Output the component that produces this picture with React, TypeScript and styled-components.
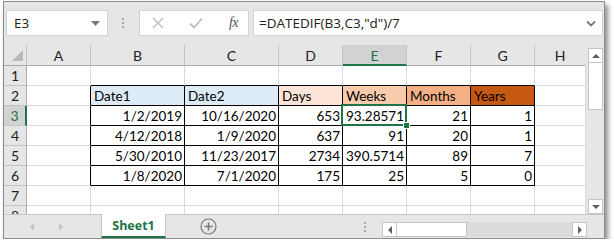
import styled, { createGlobalStyle } from 'styled-components'

const GREEN = '#217346'

const GlobalStyle = createGlobalStyle`
  html, body {
    margin: 0;
    padding: 0;
    background: #ffffff;
  }
`

type Fill = 'blue' | 'peach' | 'salmon' | 'orange' | 'rust'

const fills: Record<Fill, string> = {
  blue: '#ddebf7',
  peach: '#fce4d6',
  salmon: '#f8cbad',
  orange: '#f4b084',
  rust: '#c65911',
}

interface CellData {
  text: string
  fill?: Fill
  align?: 'left' | 'right'
}

const columns = ['A', 'B', 'C', 'D', 'E', 'F', 'G', 'H']
const widths = [23, 64, 94, 94, 64, 64, 64, 64, 51]

// the table sits in B2:G6
const table: CellData[][] = [
  [
    { text: 'Date1', fill: 'blue', align: 'left' },
    { text: 'Date2', fill: 'blue', align: 'left' },
    { text: 'Days', fill: 'peach', align: 'left' },
    { text: 'Weeks', fill: 'salmon', align: 'left' },
    { text: 'Months', fill: 'orange', align: 'left' },
    { text: 'Years', fill: 'rust', align: 'left' },
  ],
  [{ text: '1/2/2019' }, { text: '10/16/2020' }, { text: '653' }, { text: '93.28571' }, { text: '21' }, { text: '1' }],
  [{ text: '4/12/2018' }, { text: '1/9/2020' }, { text: '637' }, { text: '91' }, { text: '20' }, { text: '1' }],
  [{ text: '5/30/2010' }, { text: '11/23/2017' }, { text: '2734' }, { text: '390.5714' }, { text: '89' }, { text: '7' }],
  [{ text: '1/8/2020' }, { text: '7/1/2020' }, { text: '175' }, { text: '25' }, { text: '5' }, { text: '0' }],
]

const Page = styled.div`
  padding: 1px 0 0 3px;
`

const Window = styled.div`
  width: 600px;
  display: flex;
  flex-direction: column;
  background: #e6e6e6;
  border: 1px solid #8c8c8c;
  box-shadow: 3px 4px 5px rgba(0, 0, 0, 0.45);
`

const FormulaBar = styled.div`
  height: 43px;
  display: flex;
  align-items: center;
  padding: 0 0 1px 2px;
  box-sizing: border-box;
`

const InputBox = styled.div<{ $w?: number; $grow?: boolean }>`
  height: 26px;
  box-sizing: border-box;
  width: ${(p) => (p.$w ? `${p.$w}px` : 'auto')};
  flex: ${(p) => (p.$grow ? '1' : 'none')};
  background: #ffffff;
  border: 1px solid #d4d4d4;
  display: flex;
  align-items: center;
  font-family: 'Open Sans', 'Liberation Sans', sans-serif;
  font-size: 13.5px;
  color: #222;
`

const NameText = styled.span`
  flex: 1;
  padding-left: 7px;
`

const Formula = styled.span`
  flex: 1;
  padding-left: 5px;
  font-family: 'Open Sans', 'Liberation Sans', sans-serif;
  font-size: 13.5px;
  color: #222;
`

const Dots = styled.div<{ $mx: number }>`
  width: 3px;
  margin: 0 ${(p) => p.$mx}px;
  display: flex;
  flex-direction: column;
  gap: 2px;
  span {
    width: 2px;
    height: 2px;
    background: #a8a8a8;
  }
`

const FxButtons = styled(InputBox)`
  justify-content: space-between;
  padding: 0 10px 0 12px;
`

const Fx = styled.span`
  font-family: 'Liberation Serif', serif;
  font-style: italic;
  font-size: 14px;
  color: #555;
  letter-spacing: -0.5px;
`

const Body = styled.div`
  height: 169px;
  display: flex;
  gap: 2px;
`

const Sheet = styled.div`
  width: 582px;
  height: 169px;
  overflow: hidden;
  display: grid;
  grid-template-columns: ${widths.map((w) => `${w}px`).join(' ')};
  grid-template-rows: 21px repeat(8, 20px);
  background: #ffffff;
  font-family: Lato, 'Liberation Sans', sans-serif;
  font-size: 13.5px;
  color: #000;
`

const HeadCell = styled.div<{ $active?: boolean; $last?: boolean }>`
  box-sizing: border-box;
  background: ${(p) => (p.$active ? '#d2d2d2' : '#e6e6e6')};
  border-right: 1px solid ${(p) => (p.$last ? 'transparent' : '#c3c3c3')};
  border-bottom: ${(p) => (p.$active ? `2px solid ${GREEN}` : '1px solid #ababab')};
  color: ${(p) => (p.$active ? GREEN : '#222')};
  display: flex;
  align-items: center;
  justify-content: center;
  padding-top: ${(p) => (p.$active ? '2px' : '1px')};
  font-size: 14px;
`

const Corner = styled(HeadCell)`
  align-items: flex-end;
  justify-content: flex-end;
  padding: 0 3px 4px 0;
`

const RowHead = styled.div<{ $active?: boolean }>`
  box-sizing: border-box;
  background: ${(p) => (p.$active ? '#d2d2d2' : '#e6e6e6')};
  border-right: ${(p) => (p.$active ? `2px solid ${GREEN}` : '1px solid #ababab')};
  border-bottom: 1px solid #c3c3c3;
  color: ${(p) => (p.$active ? GREEN : '#222')};
  display: flex;
  align-items: center;
  justify-content: center;
  font-size: 14px;
`

const Cell = styled.div<{ $fill?: Fill; $align?: 'left' | 'right'; $right?: string; $bottom?: string }>`
  position: relative;
  box-sizing: border-box;
  background: ${(p) => (p.$fill ? fills[p.$fill] : '#ffffff')};
  border-right: 1px solid ${(p) => p.$right ?? '#d9d9d9'};
  border-bottom: 1px solid ${(p) => p.$bottom ?? '#d9d9d9'};
  display: flex;
  align-items: flex-end;
  justify-content: ${(p) => (p.$align === 'left' ? 'flex-start' : 'flex-end')};
  padding: 0 2px 1px 3px;
  white-space: nowrap;
`

const Selection = styled.div`
  position: absolute;
  left: -2px;
  top: -2px;
  right: -1px;
  bottom: -1px;
  border: 2px solid ${GREEN};
  pointer-events: none;
  z-index: 2;
`

const Handle = styled.div`
  position: absolute;
  right: -5px;
  bottom: -5px;
  width: 5px;
  height: 5px;
  background: ${GREEN};
  border: 1px solid #ffffff;
`

const VScroll = styled.div`
  width: 15px;
  margin-top: 3px;
  display: flex;
  flex-direction: column;
`

const ScrollBtn = styled.div`
  box-sizing: border-box;
  width: 15px;
  height: 15px;
  background: #ffffff;
  border: 1px solid #c6c6c6;
  display: flex;
  align-items: center;
  justify-content: center;
`

const VThumb = styled.div`
  height: 47px;
  box-sizing: border-box;
  background: #ffffff;
  border: 1px solid #c6c6c6;
  border-top: none;
`

const VTrack = styled.div`
  flex: 1;
`

const TabBar = styled.div`
  height: 23px;
  display: flex;
  align-items: stretch;
  border-top: 1px solid #c6c6c6;
`

const NavArea = styled.div`
  width: 97px;
  display: flex;
  align-items: center;
  gap: 23px;
  padding-left: 25px;
  box-sizing: border-box;
`

const Tab = styled.div`
  width: 65px;
  margin-top: -1px;
  box-sizing: border-box;
  background: #ffffff;
  border-left: 1px solid #c6c6c6;
  border-right: 1px solid #c6c6c6;
  border-bottom: 2px solid ${GREEN};
  display: flex;
  align-items: center;
  justify-content: center;
  font-family: 'Open Sans', 'Liberation Sans', sans-serif;
  font-weight: 700;
  font-size: 12.5px;
  color: ${GREEN};
`

const AddSheet = styled.div`
  width: 84px;
  display: flex;
  align-items: center;
  justify-content: center;
`

const Spacer = styled.div`
  flex: 1;
  display: flex;
  align-items: center;
  justify-content: flex-end;
  padding-right: 15px;
`

const HScroll = styled.div`
  width: 205px;
  height: 15px;
  margin-top: 7px;
  margin-right: 17px;
  display: flex;
  background: #dcdcdc;
`

const HThumb = styled.div`
  width: 70px;
  box-sizing: border-box;
  background: #ffffff;
  border: 1px solid #c6c6c6;
  border-left: none;
`

const HTrack = styled.div`
  flex: 1;
`

const Tri = ({ dir, color = '#606060' }: { dir: 'up' | 'down' | 'left' | 'right'; color?: string }) => {
  const pts = {
    up: '0,5 4,1 8,5',
    down: '0,1 8,1 4,5',
    left: '5,0 5,8 1,4',
    right: '1,0 1,8 5,4',
  }[dir]
  const horiz = dir === 'left' || dir === 'right'
  return (
    <svg width={horiz ? 6 : 8} height={horiz ? 8 : 6} viewBox={horiz ? '0 0 6 8' : '0 0 8 6'}>
      <polygon points={pts} fill={color} />
    </svg>
  )
}

export default function App() {
  const renderCell = (r: number, c: number) => {
    // r: 1..8, c: 0..7 (A..H)
    const inTable = r >= 2 && r <= 6 && c >= 1 && c <= 6
    const data = inTable ? table[r - 2][c - 1] : undefined
    let right: string | undefined
    let bottom: string | undefined
    if (inTable) {
      right = '#000'
      bottom = '#000'
    }
    if (c === 0 && r >= 2 && r <= 6) right = '#000'
    if (r === 1 && c >= 1 && c <= 6) bottom = '#000'
    const selected = r === 3 && c === 4
    return (
      <Cell key={`${r}-${c}`} $fill={data?.fill} $align={data?.align} $right={right} $bottom={bottom}>
        {data?.text}
        {selected && (
          <Selection>
            <Handle />
          </Selection>
        )}
      </Cell>
    )
  }

  return (
    <Page>
      <GlobalStyle />
      <Window>
        <FormulaBar>
          <InputBox $w={102}>
            <NameText>E3</NameText>
            <svg width="9" height="5" viewBox="0 0 9 5" style={{ marginRight: 7 }}>
              <polygon points="0,0 9,0 4.5,5" fill="#7a7a7a" />
            </svg>
          </InputBox>
          <Dots $mx={14}>
            <span />
            <span />
            <span />
          </Dots>
          <FxButtons $w={110}>
            <svg width="12" height="12" viewBox="0 0 12 12">
              <path d="M1 1 L11 11 M11 1 L1 11" stroke="#bdbdbd" strokeWidth="1.4" />
            </svg>
            <svg width="14" height="12" viewBox="0 0 14 12">
              <path d="M1 6.5 L5 10.5 L13 1.5" stroke="#bdbdbd" strokeWidth="1.8" fill="none" />
            </svg>
            <Fx>fx</Fx>
          </FxButtons>
          <InputBox $grow style={{ marginLeft: 4, marginRight: 1 }}>
            <Formula>=DATEDIF(B3,C3,"d")/7</Formula>
            <svg width="10" height="7" viewBox="0 0 10 7" style={{ marginRight: 6 }}>
              <path d="M1 1.5 L5 5.5 L9 1.5" stroke="#7a7a7a" strokeWidth="1.8" fill="none" />
            </svg>
          </InputBox>
        </FormulaBar>
        <Body>
          <Sheet>
            <Corner>
              <svg width="11" height="11" viewBox="0 0 11 11">
                <polygon points="11,0 11,11 0,11" fill="#b9b9b9" />
              </svg>
            </Corner>
            {columns.map((col, i) => (
              <HeadCell key={col} $active={col === 'E'} $last={i === columns.length - 1}>
                {col}
              </HeadCell>
            ))}
            {[1, 2, 3, 4, 5, 6, 7, 8].map((r) => [
              <RowHead key={`h${r}`} $active={r === 3}>
                {r}
              </RowHead>,
              ...columns.map((_, c) => renderCell(r, c)),
            ])}
          </Sheet>
          <VScroll>
            <ScrollBtn>
              <Tri dir="up" />
            </ScrollBtn>
            <VThumb />
            <VTrack />
            <ScrollBtn>
              <Tri dir="down" />
            </ScrollBtn>
          </VScroll>
        </Body>
        <TabBar>
          <NavArea>
            <Tri dir="left" color="#c4c4c4" />
            <Tri dir="right" color="#c4c4c4" />
          </NavArea>
          <Tab>Sheet1</Tab>
          <AddSheet>
            <svg width="17" height="17" viewBox="0 0 17 17">
              <circle cx="8.5" cy="8.5" r="7.5" stroke="#7a7a7a" strokeWidth="1.2" fill="none" />
              <path d="M8.5 4.5 V12.5 M4.5 8.5 H12.5" stroke="#7a7a7a" strokeWidth="1.6" />
            </svg>
          </AddSheet>
          <Spacer>
            <Dots $mx={0}>
              <span />
              <span />
              <span />
            </Dots>
          </Spacer>
          <HScroll>
            <ScrollBtn>
              <Tri dir="left" />
            </ScrollBtn>
            <HThumb />
            <HTrack />
            <ScrollBtn>
              <Tri dir="right" />
            </ScrollBtn>
          </HScroll>
        </TabBar>
      </Window>
    </Page>
  )
}
